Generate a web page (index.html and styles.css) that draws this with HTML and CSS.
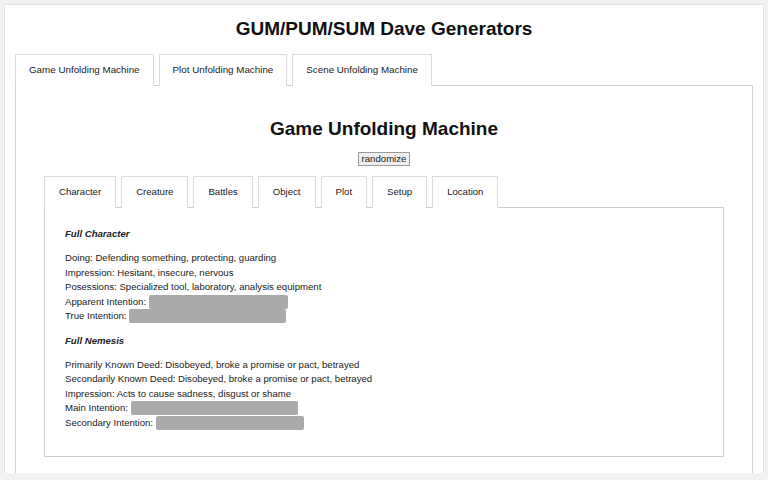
FILE: index.html
```html
<!DOCTYPE html>
<html lang="en">
<head>
    <meta charset="UTF-8">
    <meta name="viewport" content="width=device-width, initial-scale=1.0">
    <title>GUM/PUM/SUM Dave Generators</title>
    <link rel="stylesheet" href="styles.css">
</head>
<body>
    <div class="page">
        <h1 class="page-title">GUM/PUM/SUM Dave Generators</h1>

        <!-- Machine tabs -->
        <div class="machine-tabs">
            <div class="machine-tab active">Game Unfolding Machine</div>
            <div class="machine-tab">Plot Unfolding Machine</div>
            <div class="machine-tab">Scene Unfolding Machine</div>
        </div>

        <div class="machine-panel">
            <h2 class="machine-title">Game Unfolding Machine</h2>
            <div class="randomize-row">
                <button type="button" class="randomize">randomize</button>
            </div>

            <!-- Generator tabs -->
            <div class="gen-tabs">
                <div class="gen-tab active">Character</div>
                <div class="gen-tab">Creature</div>
                <div class="gen-tab">Battles</div>
                <div class="gen-tab">Object</div>
                <div class="gen-tab">Plot</div>
                <div class="gen-tab">Setup</div>
                <div class="gen-tab">Location</div>
            </div>

            <div class="gen-panel">
                <h4 class="gen-heading">Full Character</h4>
                <p class="gen-lines">
                    Doing: Defending something, protecting, guarding<br>
                    Impression: Hesitant, insecure, nervous<br>
                    Posessions: Specialized tool, laboratory, analysis equipment<br>
                    Apparent Intention: <span class="hidden-value" style="width: 139px"></span><br>
                    True Intention: <span class="hidden-value" style="width: 157px"></span>
                </p>

                <h4 class="gen-heading">Full Nemesis</h4>
                <p class="gen-lines">
                    Primarily Known Deed: Disobeyed, broke a promise or pact, betrayed<br>
                    Secondarily Known Deed: Disobeyed, broke a promise or pact, betrayed<br>
                    Impression: Acts to cause sadness, disgust or shame<br>
                    Main Intention: <span class="hidden-value" style="width: 167px"></span><br>
                    Secondary Intention: <span class="hidden-value" style="width: 148px"></span>
                </p>
            </div>
        </div>
    </div>
</body>
</html>
```

FILE: styles.css
```css
/* Page background and base font */
body {
    font-family: "Liberation Sans", Arial, sans-serif;
    background-color: #f2f2f2;
    color: #222;
    margin: 0;
}

/* White sheet holding everything */
.page {
    margin: 4px 4px 0;
    padding: 12px 10px 0;
    height: 456px;
    background-color: #ffffff;
    border: 1px solid #e2e2e2;
    border-bottom: none;
    overflow: hidden;
}

.page-title {
    font-size: 19px;
    line-height: 24px;
    text-align: center;
    margin: 0 0 13px;
    color: #111;
}

/* Top level tabs */
.machine-tabs {
    display: flex;
    gap: 5px;
    margin-bottom: -1px;
}

.machine-tab {
    font-size: 9.8px;
    line-height: 30px;
    padding: 0 13px;
    border: 1px solid #dcdcdc;
    border-bottom: none;
    background-color: #fff;
    color: #222;
}

.machine-tab.active {
    padding-bottom: 1px;
}

.machine-panel {
    border: 1px solid #d0d0d0;
    padding: 32px 28px 28px;
}

.machine-title {
    font-size: 19px;
    line-height: 22px;
    text-align: center;
    margin: 0 0 12px;
    color: #111;
}

.randomize-row {
    text-align: center;
    margin-bottom: 10px;
    line-height: 14px;
}

.randomize {
    font-family: "Liberation Sans", Arial, sans-serif;
    font-size: 9.6px;
    line-height: 12px;
    padding: 0 3px;
    background-color: #efefef;
    border: 1px solid #9a9a9a;
    border-radius: 0;
    color: #222;
    vertical-align: top;
}

/* Generator tabs inside a machine */
.gen-tabs {
    display: flex;
    gap: 5px;
    margin-bottom: -1px;
}

.gen-tab {
    font-size: 9.6px;
    line-height: 30px;
    padding: 0 14px;
    border: 1px solid #dcdcdc;
    border-bottom: none;
    background-color: #fff;
}

.gen-tab.active {
    padding-bottom: 1px;
}

.gen-panel {
    border: 1px solid #cfcfcf;
    padding: 19px 20px 16px;
    font-size: 9.6px;
    line-height: 14.5px;
}

.gen-heading {
    font-size: 9.6px;
    font-style: italic;
    font-weight: bold;
    margin: 0 0 9.5px;
}

.gen-lines {
    margin: 0 0 10px;
}

/* Values that are still locked */
.hidden-value {
    display: inline-block;
    height: 14px;
    vertical-align: middle;
    background-color: #aaaaaa;
    border-radius: 2px;
}
```
